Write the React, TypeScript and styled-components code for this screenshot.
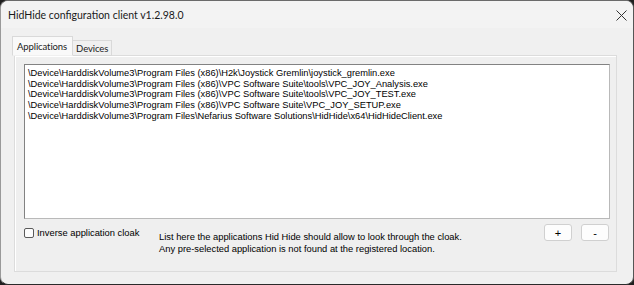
import styled, { createGlobalStyle } from 'styled-components';

const GlobalStyle = createGlobalStyle`
    html, body {
        margin: 0;
        padding: 0;
        background: #1f1f1f;
    }
    * {
        box-sizing: border-box;
    }
`;

const Window = styled.div`
    width: 634px;
    height: 285px;
    background-color: #f0f0f0;
    border: 1px solid #9a9a9a;
    border-top-color: #6a6a6a;
    border-right-color: #555;
    border-bottom-color: #2a2a2a;
    border-radius: 8px;
    overflow: hidden;
    display: flex;
    flex-direction: column;
`;

const TitleBar = styled.div`
    height: 27px;
    flex-shrink: 0;
    background-color: #f3f3f3;
    display: flex;
    align-items: center;
    justify-content: space-between;
    padding: 0 2px 0 7px;
    font-family: Lato, 'Open Sans', sans-serif;
    font-size: 10.5px;
    color: #1a1a1a;
`;

const CloseButton = styled.div`
    width: 20px;
    height: 20px;
    display: flex;
    align-items: center;
    justify-content: center;
    margin-top: 1px;
`;

const Content = styled.div`
    flex: 1;
    display: flex;
    flex-direction: column;
    padding: 8px 16px 12px 13px;
`;

const TabStrip = styled.div`
    display: flex;
    align-items: flex-end;
    height: 20px;
    position: relative;
    z-index: 1;
`;

const Tab = styled.div<{ $active?: boolean }>`
    height: ${p => (p.$active ? '20px' : '16px')};
    padding: ${p => (p.$active ? '2px 5px 0 4px' : '1px 3px 0 3px')};
    margin-left: ${p => (p.$active ? '-2px' : '0')};
    background-color: ${p => (p.$active ? '#f9f9f9' : '#f0f0f0')};
    border: 1px solid #d9d9d9;
    border-bottom: ${p => (p.$active ? '1px solid #f0f0f0' : '1px solid #d9d9d9')};
    border-left: ${p => (p.$active ? '1px solid #d9d9d9' : 'none')};
    font-family: Lato, 'Open Sans', sans-serif;
    font-size: 9.5px;
    letter-spacing: -0.1px;
    line-height: 14px;
    color: #1a1a1a;
    display: flex;
    align-items: center;
`;

const Panel = styled.div`
    flex: 1;
    margin-top: -1px;
    background-color: #efefef;
    border: 1px solid #dcdcdc;
    box-shadow: inset 1px 1px 0 #ffffff;
    display: flex;
    flex-direction: column;
    padding: 8px 6px 0 9px;
`;

const ListBox = styled.div`
    height: 155px;
    background-color: #ffffff;
    border: 1px solid #828282;
    border-bottom-color: #b9b9b9;
    border-right-color: #b9b9b9;
    padding: 3px 3px;
    font-family: 'Liberation Sans', Arial, sans-serif;
    font-size: 9.3px;
    line-height: 10.67px;
    color: #000;
`;

const ListItem = styled.div`
    white-space: nowrap;
`;

const BottomRow = styled.div`
    display: flex;
    align-items: flex-start;
    margin-top: 5px;
    font-family: 'Liberation Sans', Arial, sans-serif;
    font-size: 9.35px;
    color: #000;
`;

const CheckLabel = styled.label`
    display: flex;
    align-items: center;
    gap: 3px;
    margin-top: 4px;
    width: 135px;
    flex-shrink: 0;
`;

const CheckBox = styled.span`
    width: 10px;
    height: 10px;
    border: 1px solid #5a5a5a;
    border-radius: 2px;
    background: #fdfdfd;
`;

const InfoText = styled.div`
    flex: 1;
    margin-top: 7px;
    line-height: 12px;
`;

const ButtonGroup = styled.div`
    display: flex;
    gap: 9px;
    margin-right: 1px;
`;

const SmallButton = styled.div`
    width: 28px;
    height: 17px;
    background-color: #fdfdfd;
    border: 1px solid #d0d0d0;
    border-radius: 3px;
    display: flex;
    align-items: center;
    justify-content: center;
    font-family: 'Liberation Sans', Arial, sans-serif;
    font-size: 11px;
    color: #000;
`;

const apps = [
    '\\Device\\HarddiskVolume3\\Program Files (x86)\\H2k\\Joystick Gremlin\\joystick_gremlin.exe',
    '\\Device\\HarddiskVolume3\\Program Files (x86)\\VPC Software Suite\\tools\\VPC_JOY_Analysis.exe',
    '\\Device\\HarddiskVolume3\\Program Files (x86)\\VPC Software Suite\\tools\\VPC_JOY_TEST.exe',
    '\\Device\\HarddiskVolume3\\Program Files (x86)\\VPC Software Suite\\VPC_JOY_SETUP.exe',
    '\\Device\\HarddiskVolume3\\Program Files\\Nefarius Software Solutions\\HidHide\\x64\\HidHideClient.exe',
];

export default function App() {
    return (
        <>
            <GlobalStyle />
            <Window>
                <TitleBar>
                    <span>HidHide configuration client v1.2.98.0</span>
                    <CloseButton>
                        <svg width="11" height="11" viewBox="0 0 11 11">
                            <path d="M0.5 0.5 L10.5 10.5 M10.5 0.5 L0.5 10.5" stroke="#333" strokeWidth="1" />
                        </svg>
                    </CloseButton>
                </TitleBar>
                <Content>
                    <TabStrip>
                        <Tab $active>Applications</Tab>
                        <Tab>Devices</Tab>
                    </TabStrip>
                    <Panel>
                        <ListBox>
                            {apps.map(a => (
                                <ListItem key={a}>{a}</ListItem>
                            ))}
                        </ListBox>
                        <BottomRow>
                            <CheckLabel>
                                <CheckBox />
                                Inverse application cloak
                            </CheckLabel>
                            <InfoText>
                                List here the applications Hid Hide should allow to look through the cloak.
                                <br />
                                Any pre-selected application is not found at the registered location.
                            </InfoText>
                            <ButtonGroup>
                                <SmallButton>+</SmallButton>
                                <SmallButton>-</SmallButton>
                            </ButtonGroup>
                        </BottomRow>
                    </Panel>
                </Content>
            </Window>
        </>
    );
}
